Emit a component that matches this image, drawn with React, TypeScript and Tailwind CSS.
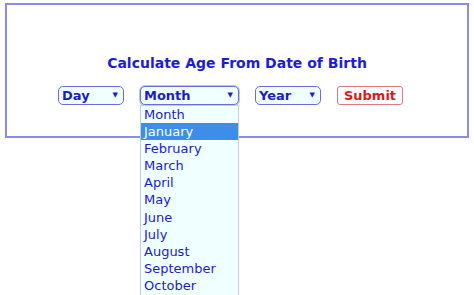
import React from 'react';

// only the entries visible above the bottom edge of the view
const months = [
  'Month',
  'January',
  'February',
  'March',
  'April',
  'May',
  'June',
  'July',
  'August',
  'September',
  'October',
];

// Fake closed select box with a small caret on the right
const SelectBox: React.FC<{ label: string; width: string; active?: boolean }> = ({ label, width, active }) => (
  <div
    className={`${width} h-[19px] flex items-center justify-between pl-[3px] pr-[5px] rounded-[5px] border border-[#6b6be0] bg-[#f0ffff] text-[13px] font-bold text-[#1c1cc8] ${active ? 'ring-1 ring-[#b8c8ee]' : ''}`}
  >
    <span className="leading-none">{label}</span>
    <span className="text-[7px] leading-none text-[#1c1cc8]">▼</span>
  </div>
);

const App: React.FC = () => {
  return (
    <div className="w-[474px] h-[295px] overflow-hidden bg-white pt-[3px] pl-[5px] font-['DejaVu_Sans',sans-serif]">
      <div className="w-[464px] h-[135px] border-2 border-[#8b8be6] flex flex-col">
        <h1 className="mt-[46px] text-center text-[14px] leading-[24px] font-bold text-[#1c1cd8]">
          Calculate Age From Date of Birth
        </h1>
        <div className="mt-[11px] ml-[51px] flex gap-4">
          <SelectBox label="Day" width="w-[66px]" />
          <div className="relative">
            <SelectBox label="Month" width="w-[99px]" active />
            {/* open dropdown list, runs past the bottom of the view */}
            <ul className="absolute left-0 top-[19px] w-[99px] pb-[8px] z-10 bg-[#f0ffff] border border-[#c4cce0] border-b-0 text-[13px] text-[#1c1cc8]">
              {months.map((m) => (
                <li
                  key={m}
                  className={`h-[17.1px] leading-[17px] pl-[3px] ${m === 'January' ? 'bg-[#3d8ee8] text-white' : ''}`}
                >
                  {m}
                </li>
              ))}
            </ul>
          </div>
          <SelectBox label="Year" width="w-[66px]" />
          <button className="w-[66px] h-[19px] rounded-[3px] border border-[#e07a7a] bg-[#f8fdff] text-[13px] font-bold text-[#e01818] leading-none">
            Submit
          </button>
        </div>
      </div>
    </div>
  );
};

export default App;
